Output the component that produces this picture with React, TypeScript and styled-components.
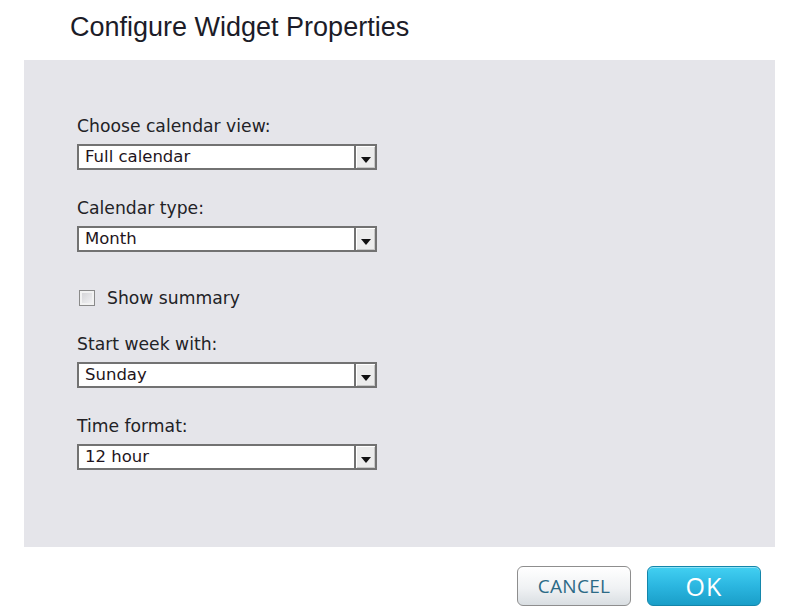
import React, { useState } from 'react';
import styled, { createGlobalStyle } from 'styled-components';

const GlobalStyle = createGlobalStyle`
  html, body {
    margin: 0;
    padding: 0;
    background: #ffffff;
  }
`;

const Page = styled.div`
  width: 791px;
  height: 612px;
  display: flex;
  flex-direction: column;
`;

const Title = styled.h1`
  margin: 12px 0 0 70px;
  height: 48px;
  font-family: 'Liberation Sans', Arial, sans-serif;
  font-size: 27px;
  font-weight: normal;
  line-height: 30px;
  color: #1c1c28;
`;

const Panel = styled.div`
  margin: 0 16px 0 24px;
  height: 487px;
  box-sizing: border-box;
  background: #e5e5ea;
  padding: 57px 0 0 53px;
  display: flex;
  flex-direction: column;
`;

const FieldGroup = styled.div<{ $gap: number }>`
  display: flex;
  flex-direction: column;
  gap: 8px;
  margin-bottom: ${(p) => p.$gap}px;
`;

const Label = styled.label`
  font-family: 'DejaVu Sans', Verdana, sans-serif;
  font-size: 17.2px;
  line-height: 19px;
  color: #222226;
`;

const SelectBox = styled.div`
  width: 300px;
  height: 26px;
  box-sizing: border-box;
  border: 2px solid #727272;
  background: #ffffff;
  display: flex;
  align-items: stretch;
`;

const SelectValue = styled.div`
  flex: 1;
  padding-left: 6px;
  font-family: 'DejaVu Sans', Verdana, sans-serif;
  font-size: 16.5px;
  line-height: 22px;
  color: #1e1420;
`;

const SelectArrow = styled.div`
  width: 21px;
  border-left: 2px solid #727272;
  background: #ececec;
  box-shadow: inset 1px 1px 0 #ffffff, inset -1px -1px 0 #c8c8c8;
  display: flex;
  justify-content: center;
  align-items: flex-end;
  padding-bottom: 5px;
  box-sizing: border-box;

  &::after {
    content: '';
    width: 0;
    height: 0;
    border-left: 5px solid transparent;
    border-right: 5px solid transparent;
    border-top: 6px solid #111;
  }
`;

const CheckRow = styled.label`
  display: flex;
  align-items: center;
  gap: 12px;
  margin: 0 0 28px 2px;
  height: 18px;
  cursor: pointer;
`;

const CheckBox = styled.span<{ $checked: boolean }>`
  width: 16px;
  height: 16px;
  box-sizing: border-box;
  border: 1px solid #8a8a8a;
  background: linear-gradient(135deg, #d0d0d3 0%, #f6f6f8 100%);
  box-shadow: inset 0 0 0 2px #f2f2f2;
  display: flex;
  align-items: center;
  justify-content: center;
  font-size: 11px;
  color: #222;
`;

const Footer = styled.div`
  display: flex;
  justify-content: flex-end;
  gap: 16px;
  padding: 19px 30px 0 0;
`;

const Button = styled.button<{ $primary?: boolean }>`
  height: 40px;
  width: 114px;
  border-radius: 6px;
  border: 1px solid ${(p) => (p.$primary ? '#1486ab' : '#8e8e8e')};
  background: ${(p) =>
    p.$primary
      ? 'linear-gradient(to bottom, #42d0f2 0%, #2bb6e0 50%, #1a9ec8 100%)'
      : 'linear-gradient(to bottom, #ffffff 0%, #f0f2f4 55%, #d9dee2 100%)'};
  box-shadow: ${(p) =>
    p.$primary ? 'inset 0 1px 0 rgba(255,255,255,0.4)' : 'inset 0 1px 0 #ffffff'};
  color: ${(p) => (p.$primary ? '#ffffff' : '#2b6a86')};
  font-family: 'Open Sans', 'Liberation Sans', sans-serif;
  font-size: ${(p) => (p.$primary ? '25px' : '19px')};
  font-weight: 500;
  letter-spacing: ${(p) => (p.$primary ? '1px' : '0.3px')};
  cursor: pointer;
  padding: 0;
`;

const Select: React.FC<{ label: string; value: string; gap: number }> = ({ label, value, gap }) => (
  <FieldGroup $gap={gap}>
    <Label>{label}</Label>
    <SelectBox>
      <SelectValue>{value}</SelectValue>
      <SelectArrow />
    </SelectBox>
  </FieldGroup>
);

const App: React.FC = () => {
  const [summary, setSummary] = useState(false);

  return (
    <Page>
      <GlobalStyle />
      <Title>Configure Widget Properties</Title>
      <Panel>
        <Select label="Choose calendar view:" value="Full calendar" gap={29} />
        <Select label="Calendar type:" value="Month" gap={37} />
        <CheckRow onClick={() => setSummary(!summary)}>
          <CheckBox $checked={summary}>{summary ? '✓' : ''}</CheckBox>
          <Label as="span">Show summary</Label>
        </CheckRow>
        <Select label="Start week with:" value="Sunday" gap={29} />
        <Select label="Time format:" value="12 hour" gap={0} />
      </Panel>
      <Footer>
        <Button>CANCEL</Button>
        <Button $primary>OK</Button>
      </Footer>
    </Page>
  );
};

export default App;
